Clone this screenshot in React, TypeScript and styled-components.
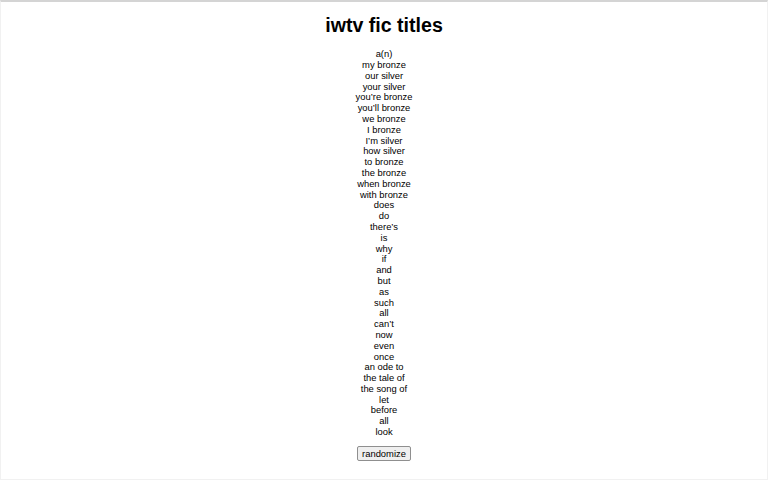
import React from "react";
import styled, { createGlobalStyle } from "styled-components";

const Global = createGlobalStyle`
  html, body { margin: 0; padding: 0; background: #ffffff; }
  body { font-family: "Liberation Sans", Arial, sans-serif; color: #000; }
`;

const Frame = styled.div`
  box-sizing: border-box;
  height: 480px;
  width: 768px;
  border-top: 2px solid #d4d4d4;
  border-left: 1px solid #f1f1f1;
  border-right: 1px solid #f1f1f1;
  border-bottom: 1px solid #f1f1f1;
  display: flex;
  flex-direction: column;
  align-items: center;
  padding-top: 12px;
`;

const Title = styled.h1`
  margin: 0;
  font-size: 19.6px;
  font-weight: bold;
  line-height: 22.5px;
`;

const List = styled.div`
  margin-top: 12.7px;
  display: flex;
  flex-direction: column;
  align-items: center;
`;

const Line = styled.div`
  font-size: 9.4px;
  line-height: 10.8px;
  text-align: center;
  white-space: nowrap;
`;

const Button = styled.button`
  margin-top: 8px;
  font-family: "Liberation Sans", Arial, sans-serif;
  font-size: 9.4px;
  height: 15px;
  padding: 0 4px;
  background: #efefef;
  border: 1px solid #8f8f8f;
  border-radius: 2px;
  color: #000;
  line-height: 1;
`;

const words = [
  "a(n)",
  "my bronze",
  "our silver",
  "your silver",
  "you\u2019re bronze",
  "you\u2019ll bronze",
  "we bronze",
  "I bronze",
  "I\u2019m silver",
  "how silver",
  "to bronze",
  "the bronze",
  "when bronze",
  "with bronze",
  "does",
  "do",
  "there\u2019s",
  "is",
  "why",
  "if",
  "and",
  "but",
  "as",
  "such",
  "all",
  "can\u2019t",
  "now",
  "even",
  "once",
  "an ode to",
  "the tale of",
  "the song of",
  "let",
  "before",
  "all",
  "look",
];

export default function App() {
  return (
    <>
      <Global />
      <Frame>
        <Title>iwtv fic titles</Title>
        <List>
          {words.map((w, i) => (
            <Line key={i}>{w}</Line>
          ))}
        </List>
        <Button>randomize</Button>
      </Frame>
    </>
  );
}
